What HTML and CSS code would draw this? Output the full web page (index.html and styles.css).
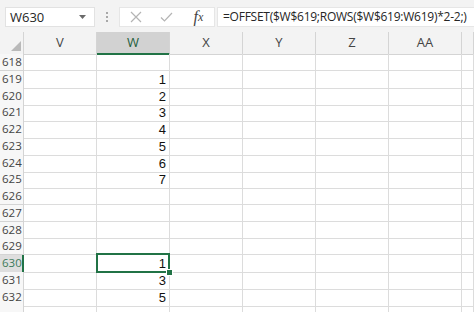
FILE: index.html
```html
<!DOCTYPE html>
<html lang="en">
<head>
  <meta charset="UTF-8">
  <title>Sheet1</title>
  <link rel="stylesheet" href="styles.css">
</head>
<body>
  <!-- Name box + formula bar -->
  <div class="topbar">
    <div class="namebox">
      <span>W630</span>
      <svg class="dropdown" width="7" height="4" viewBox="0 0 7 4"><path d="M0 0h7L3.5 4z" fill="#6a6a6a"/></svg>
    </div>
    <div class="grip"><i></i><i></i><i></i></div>
    <div class="fxbox">
      <span class="tool">
        <svg width="12" height="12" viewBox="0 0 12 12"><path d="M1 1l10 10M11 1L1 11" stroke="#b4b4b4" stroke-width="1.2" fill="none"/></svg>
      </span>
      <span class="tool">
        <svg width="13" height="10" viewBox="0 0 13 10"><path d="M1 5.5l3.5 3.5L12 1" stroke="#b4b4b4" stroke-width="1.2" fill="none"/></svg>
      </span>
      <span class="tool fx">f<sub>x</sub></span>
    </div>
    <div class="formula">=OFFSET($W$619;ROWS($W$619:W619)*2-2;)</div>
  </div>

  <!-- Grid -->
  <div class="sheet">
    <div class="row head">
      <div class="corner"><svg width="10" height="10" viewBox="0 0 10 10"><path d="M10 0v10H0z" fill="#b9b9b9"/></svg></div>
      <div class="col">V</div><div class="col active">W</div><div class="col">X</div><div class="col">Y</div><div class="col">Z</div><div class="col">AA</div><div class="col"></div>
    </div>
    <div class="row"><div class="rn">618</div><div class="c"></div><div class="c"></div><div class="c"></div><div class="c"></div><div class="c"></div><div class="c"></div><div class="c"></div></div>
    <div class="row"><div class="rn">619</div><div class="c"></div><div class="c num">1</div><div class="c"></div><div class="c"></div><div class="c"></div><div class="c"></div><div class="c"></div></div>
    <div class="row"><div class="rn">620</div><div class="c"></div><div class="c num">2</div><div class="c"></div><div class="c"></div><div class="c"></div><div class="c"></div><div class="c"></div></div>
    <div class="row"><div class="rn">621</div><div class="c"></div><div class="c num">3</div><div class="c"></div><div class="c"></div><div class="c"></div><div class="c"></div><div class="c"></div></div>
    <div class="row"><div class="rn">622</div><div class="c"></div><div class="c num">4</div><div class="c"></div><div class="c"></div><div class="c"></div><div class="c"></div><div class="c"></div></div>
    <div class="row"><div class="rn">623</div><div class="c"></div><div class="c num">5</div><div class="c"></div><div class="c"></div><div class="c"></div><div class="c"></div><div class="c"></div></div>
    <div class="row"><div class="rn">624</div><div class="c"></div><div class="c num">6</div><div class="c"></div><div class="c"></div><div class="c"></div><div class="c"></div><div class="c"></div></div>
    <div class="row"><div class="rn">625</div><div class="c"></div><div class="c num">7</div><div class="c"></div><div class="c"></div><div class="c"></div><div class="c"></div><div class="c"></div></div>
    <div class="row"><div class="rn">626</div><div class="c"></div><div class="c"></div><div class="c"></div><div class="c"></div><div class="c"></div><div class="c"></div><div class="c"></div></div>
    <div class="row"><div class="rn">627</div><div class="c"></div><div class="c"></div><div class="c"></div><div class="c"></div><div class="c"></div><div class="c"></div><div class="c"></div></div>
    <div class="row"><div class="rn">628</div><div class="c"></div><div class="c"></div><div class="c"></div><div class="c"></div><div class="c"></div><div class="c"></div><div class="c"></div></div>
    <div class="row"><div class="rn">629</div><div class="c"></div><div class="c"></div><div class="c"></div><div class="c"></div><div class="c"></div><div class="c"></div><div class="c"></div></div>
    <div class="row"><div class="rn active">630</div><div class="c"></div><div class="c num selected">1</div><div class="c"></div><div class="c"></div><div class="c"></div><div class="c"></div><div class="c"></div></div>
    <div class="row"><div class="rn">631</div><div class="c"></div><div class="c num">3</div><div class="c"></div><div class="c"></div><div class="c"></div><div class="c"></div><div class="c"></div></div>
    <div class="row"><div class="rn">632</div><div class="c"></div><div class="c num">5</div><div class="c"></div><div class="c"></div><div class="c"></div><div class="c"></div><div class="c"></div></div>
    <div class="row"><div class="rn"></div><div class="c"></div><div class="c"></div><div class="c"></div><div class="c"></div><div class="c"></div><div class="c"></div><div class="c"></div></div>
  </div>
</body>
</html>
```

FILE: styles.css
```css
/* Spreadsheet window */
body {
  margin: 0;
  font-family: "Open Sans", "Noto Sans", sans-serif;
  background-color: white;
  overflow: hidden;
}

/* Name box and formula bar */
.topbar {
  display: flex;
  height: 32px;
  box-sizing: border-box;
  padding: 7px 0 5px 5px;
  background-color: #f3f3f3;
}
.namebox {
  width: 90px;
  display: flex;
  align-items: center;
  justify-content: space-between;
  box-sizing: border-box;
  padding: 0 8px 0 4px;
  background-color: white;
  border: 1px solid #e2e2e2;
  font-size: 13px;
  color: #262626;
}
.grip {
  width: 24px;
  display: flex;
  flex-direction: column;
  align-items: center;
  justify-content: center;
  gap: 2px;
}
.grip i {
  width: 2px;
  height: 2px;
  background-color: #a8a8a8;
}
.fxbox {
  width: 96px;
  display: flex;
  background-color: white;
  border: 1px solid #e6e6e6;
  box-sizing: border-box;
}
.tool {
  width: 32px;
  display: flex;
  align-items: center;
  justify-content: center;
}
.fx {
  font-family: "Liberation Serif", serif;
  font-style: italic;
  font-size: 16px;
  color: #444;
}
.fx sub {
  font-size: 12px;
  vertical-align: -2px;
}
.formula {
  flex: 1;
  margin-left: 2px;
  padding-left: 5px;
  background-color: white;
  border: 1px solid #e6e6e6;
  border-right: none;
  font-size: 12px;
  letter-spacing: -0.25px;
  line-height: 18px;
  color: #262626;
  white-space: nowrap;
  overflow: hidden;
}

/* Grid */
.row {
  display: grid;
  grid-template-columns: 24px repeat(6, 73px) 1fr;
  height: 16.75px;
}
.row > div {
  box-sizing: border-box;
  border-right: 1px solid #dcdcdc;
  border-bottom: 1px solid #dcdcdc;
}
.head {
  height: 22px;
}
.head > div {
  background-color: #f3f3f3;
  border-color: #d4d4d4;
}
.corner {
  display: flex;
  align-items: flex-end;
  justify-content: flex-end;
  padding: 0 2px 3px 0;
}
.col {
  text-align: center;
  font-size: 13px;
  line-height: 21px;
  color: #444;
}
.col.active {
  background-color: #d2d2d2;
  border-bottom: 2px solid #217346;
  color: #1e5e3b;
}
.rn {
  background-color: #f7f7f7;
  font-size: 11.5px;
  line-height: 16px;
  padding-left: 2px;
  color: #444;
  border-color: #d4d4d4 !important;
}
.rn.active {
  background-color: #dedede;
  border-right: 2px solid #217346 !important;
  color: #3d7a5c;
}
.c {
  font-family: "Liberation Sans", Arial, sans-serif;
  font-size: 13px;
  line-height: 17px;
}
.num {
  text-align: right;
  padding-right: 3px;
  color: #111;
}
.selected {
  position: relative;
}
.selected::after {
  content: "";
  position: absolute;
  top: -2px;
  left: -1px;
  right: -1px;
  bottom: -1px;
  border: 2px solid #217346;
}
.selected::before {
  content: "";
  position: absolute;
  right: -4px;
  bottom: -4px;
  width: 5px;
  height: 5px;
  background-color: #217346;
  border: 1px solid white;
  z-index: 1;
}
```
